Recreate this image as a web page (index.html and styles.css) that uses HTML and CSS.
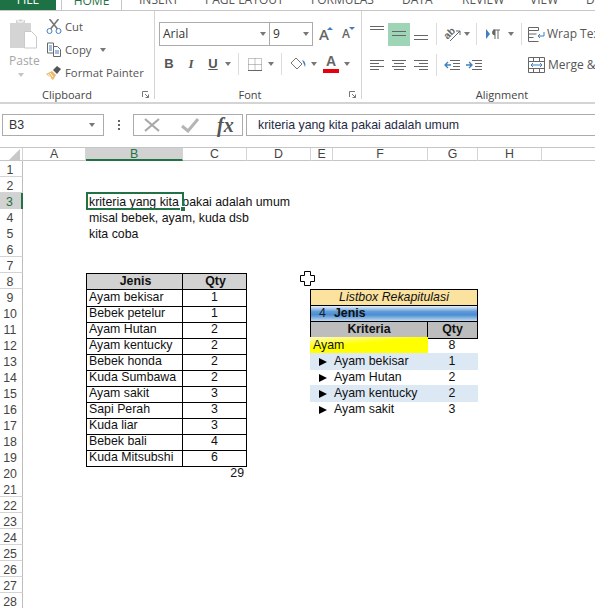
FILE: index.html
```html
<!DOCTYPE html>
<html lang="id">
<head>
<meta charset="utf-8">
<title>Listbox Rekapitulasi</title>
<link rel="stylesheet" href="styles.css">
</head>
<body>
<div class="app">
  <nav class="tabs">
    <span class="tab file">FILE</span>
    <span class="tab home">HOME</span>
    <span class="tab t-insert">INSERT</span>
    <span class="tab t-page">PAGE LAYOUT</span>
    <span class="tab t-form">FORMULAS</span>
    <span class="tab t-data">DATA</span>
    <span class="tab t-rev">REVIEW</span>
    <span class="tab t-view">VIEW</span>
    <span class="tab t-dev">DE</span>
  </nav>

  <section class="ribbon">
    <div class="group g-clip">
      <div class="group-body clip-body">
        <div class="paste">
          <svg width="29" height="31" viewBox="0 0 29 31"><path d="M1 5h6V2h9v3h6v9H15v16H1z" fill="#d4d4d4"/><path d="M9 1h5v3h-5z" fill="#d4d4d4" stroke="#fff"/><path d="M15.5 13.5h7l5 5v11.500h-12z" fill="#fff" stroke="#c9c9c9"/></svg>
          <span class="paste-label">Paste</span>
          <i class="caret light"></i>
        </div>
        <div class="clip-list">
          <div class="clip-item">
            <svg width="16" height="15" viewBox="0 0 16 15"><path d="M3.500 0l8 10M12.500 0l-8 10" stroke="#777" stroke-width="1.600" fill="none"/><circle cx="3.500" cy="12" r="2.500" fill="#fff" stroke="#3f7fbf"/><circle cx="12.500" cy="12" r="2.500" fill="#fff" stroke="#3f7fbf"/></svg>
            <span>Cut</span>
          </div>
          <div class="clip-item">
            <svg width="16" height="15" viewBox="0 0 16 15"><path d="M1.500 1h6v10h-6z" fill="#fff" stroke="#666"/><path d="M7.500 4.500h4l3 3v7h-7z" fill="#fff" stroke="#666"/><path d="M3 4h3M3 6h3M3 8h3M9 9h4M9 11h4" stroke="#3f7fbf"/></svg>
            <span>Copy</span><i class="caret copy-caret"></i>
          </div>
          <div class="clip-item">
            <svg width="16" height="15" viewBox="0 0 16 15"><path d="M0 9l6-3 4 4-3 5z" fill="#eeb76a"/><path d="M7 5l4-4 4 3-4 5z" fill="#555"/><path d="M4 8l3 4M2 9l3 4" stroke="#fff"/></svg>
            <span>Format Painter</span>
          </div>
        </div>
      </div>
      <div class="group-label label-clip">Clipboard<svg class="launch" width="7" height="7" viewBox="0 0 7 7"><path d="M.5 6V.5H6M3 3l3.500 3.500M6.500 3.500v3h-3" fill="none" stroke="#777"/></svg></div>
    </div>

    <div class="group g-font">
      <div class="group-body font-body">
        <div class="font-row1">
          <div class="combo c-name"><span>Arial</span><i class="caret"></i></div>
          <div class="combo c-size"><span>9</span><i class="caret"></i></div>
          <span class="big-a grow">A<i class="tri up"></i></span>
          <span class="big-a shrink">A<i class="tri down"></i></span>
        </div>
        <div class="font-row2">
          <span class="fmt bold">B</span>
          <span class="fmt ital">I</span>
          <span class="fmt under">U</span>
          <i class="caret c-u"></i>
          <b class="vsep s1"></b>
          <svg class="ic-border" width="14" height="13" viewBox="0 0 14 13"><path d="M.5.500h13v12H.5zM7 .5v12M.5 6.500h13" fill="none" stroke="#888" stroke-dasharray="1 1"/><path d="M0 12.500h14" stroke="#666"/></svg>
          <i class="caret c-b"></i>
          <b class="vsep s2"></b>
          <svg class="ic-fill" width="17" height="15" viewBox="0 0 17 15"><path d="M6 1l6 6-5 5-6-6z" fill="#fff" stroke="#777"/><path d="M12 3c3 1 4 4 3 7-1-3-2-5-3-7z" fill="#3f7fbf"/></svg>
          <i class="caret c-f"></i>
          <span class="font-color">A</span>
          <i class="caret c-c"></i>
        </div>
      </div>
      <div class="group-label label-font">Font<svg class="launch" width="7" height="7" viewBox="0 0 7 7"><path d="M.5 6V.5H6M3 3l3.500 3.500M6.500 3.500v3h-3" fill="none" stroke="#777"/></svg></div>
    </div>

    <div class="group g-align">
      <div class="group-body align-body">
        <div class="align-row">
          <svg class="al a1" width="14" height="8" viewBox="0 0 14 8"><path d="M0 .5h14M0 3.500h14M0 7.500h0" stroke="#666"/></svg>
          <span class="al-on"><svg width="14" height="6" viewBox="0 0 14 6"><path d="M0 .5h14M0 4.500h14" stroke="#666"/></svg></span>
          <svg class="al a3" width="14" height="8" viewBox="0 0 14 8"><path d="M0 2.500h14M0 6.500h14" stroke="#666"/></svg>
          <b class="vsep s3"></b>
          <svg class="ic-orient" width="17" height="17" viewBox="0 0 17 17"><text x="0" y="11" transform="rotate(-45 5 8)" class="orient-text">ab</text><path d="M6 15L16 5M16 5h-4M16 5v4" stroke="#666" fill="none"/></svg>
          <i class="caret c-o"></i>
          <b class="vsep s4"></b>
          <svg class="ic-para" width="14" height="10" viewBox="0 0 14 10"><path d="M0 0l4 5-4 5z" fill="#3f7fbf"/><path d="M7 1h7M9 1v9M12 1v9M9 1a2.500 2.500 0 0 0 0 5" stroke="#666" fill="#666"/></svg>
          <i class="caret c-p"></i>
          <b class="vsep s5"></b>
          <svg class="ic-wrap" width="17" height="15" viewBox="0 0 17 15"><path d="M.5.500h10v3H.5zM.5 3.500v11h10M.5 7h8M.5 10.500h5" fill="none" stroke="#666"/><path d="M16 5v4h-6M12 7l-2 2 2 2" fill="none" stroke="#3f7fbf"/></svg>
          <span class="al-text">Wrap Text</span>
        </div>
        <div class="align-row row-b">
          <svg class="al b1" width="14" height="10" viewBox="0 0 14 10"><path d="M0 .5h14M0 3.500h9M0 6.500h14M0 9.500h9" stroke="#666"/></svg>
          <svg class="al b2" width="14" height="10" viewBox="0 0 14 10"><path d="M0 .5h14M2 3.500h10M0 6.500h14M2 9.500h10" stroke="#666"/></svg>
          <svg class="al b3" width="14" height="10" viewBox="0 0 14 10"><path d="M0 .5h14M5 3.500h9M0 6.500h14M5 9.500h9" stroke="#666"/></svg>
          <b class="vsep s6"></b>
          <svg class="ic-ind" width="16" height="10" viewBox="0 0 16 10"><path d="M6 .5h10M9 3.500h7M9 6.500h7M6 9.500h10" stroke="#666"/><path d="M7 5H1M4 2L1 5l3 3" fill="none" stroke="#3f7fbf" stroke-width="1.300"/></svg>
          <svg class="ic-ind2" width="16" height="10" viewBox="0 0 16 10"><path d="M6 .5h10M9 3.500h7M9 6.500h7M6 9.500h10" stroke="#666"/><path d="M0 5h6M3 2l3 3-3 3" fill="none" stroke="#3f7fbf" stroke-width="1.300"/></svg>
          <svg class="ic-merge" width="17" height="16" viewBox="0 0 17 16"><path d="M.5.500h16v15H.5zM.5 4.500h16M.5 11.500h16M5.500.5v4M11.500.5v4M5.500 11.500v4M11.500 11.500v4" fill="none" stroke="#666"/><path d="M3 8h11M5 6L3 8l2 2M12 6l2 2-2 2" fill="none" stroke="#3f7fbf"/></svg>
          <span class="al-text">Merge &amp; Center</span>
        </div>
      </div>
      <div class="group-label">Alignment</div>
    </div>
  </section>

  <section class="formula">
    <div class="name-box"><span>B3</span><i class="caret"></i></div>
    <div class="dots"><i></i><i></i><i></i></div>
    <div class="fx-box">
      <svg width="20" height="16" viewBox="0 0 20 16"><path d="M2 2l14 12M16 2L2 14" stroke="#a9a9a9" stroke-width="2.200"/></svg>
      <svg width="20" height="16" viewBox="0 0 20 16"><path d="M2 9l6 5L18 2" fill="none" stroke="#b5b5b5" stroke-width="3"/></svg>
      <span class="fx">fx</span>
    </div>
    <div class="input">kriteria yang kita pakai adalah umum</div>
  </section>

  <section class="sheet">
    <div class="row head">
      <span class="corner"><svg width="11" height="11" viewBox="0 0 11 11"><path d="M11 0v11H0z" fill="#c8c8c8"/></svg></span>
      <span class="ch">A</span><span class="ch ch-on">B</span><span class="ch">C</span><span class="ch">D</span><span class="ch">E</span><span class="ch">F</span><span class="ch">G</span><span class="ch">H</span><span class="ch ch-last"></span>
    </div>
    <div class="row"><span class="rh">1</span></div>
    <div class="row"><span class="rh">2</span></div>
    <div class="row"><span class="rh rh-on">3</span><span class="cb t"><em class="overflow">kriteria yang kita pakai adalah umum</em><span class="sel"><i class="handle"></i></span></span></div>
    <div class="row"><span class="rh">4</span><span class="cb t"><em class="overflow">misal bebek, ayam, kuda dsb</em></span></div>
    <div class="row"><span class="rh">5</span><span class="cb t"><em class="overflow">kita coba</em></span></div>
    <div class="row"><span class="rh">6</span></div>
    <div class="row"><span class="rh">7</span></div>
    <div class="row"><span class="rh">8</span><span class="cb tb th first top">Jenis</span><span class="cc tb th top">Qty</span></div>
    <div class="row"><span class="rh">9</span><span class="cb tb first">Ayam bekisar</span><span class="cc tb num">1</span><span class="ef lb-title">Listbox Rekapitulasi</span></div>
    <div class="row"><span class="rh">10</span><span class="cb tb first">Bebek petelur</span><span class="cc tb num">1</span><span class="ef lb-count"><b class="count">4</b><b>Jenis</b></span></div>
    <div class="row"><span class="rh">11</span><span class="cb tb first">Ayam Hutan</span><span class="cc tb num">2</span><span class="lb-f lb-head">Kriteria</span><span class="cg lb-head lb-qty">Qty</span></div>
    <div class="row"><span class="rh">12</span><span class="cb tb first">Ayam kentucky</span><span class="cc tb num">2</span><span class="lb-f lb-group">Ayam</span><span class="cg num lb-num">8</span></div>
    <div class="row"><span class="rh">13</span><span class="cb tb first">Bebek honda</span><span class="cc tb num">2</span><span class="lb-f lb-item alt"><i class="arrow"></i>Ayam bekisar</span><span class="cg num lb-num alt">1</span></div>
    <div class="row"><span class="rh">14</span><span class="cb tb first">Kuda Sumbawa</span><span class="cc tb num">2</span><span class="lb-f lb-item"><i class="arrow"></i>Ayam Hutan</span><span class="cg num lb-num">2</span></div>
    <div class="row"><span class="rh">15</span><span class="cb tb first">Ayam sakit</span><span class="cc tb num">3</span><span class="lb-f lb-item alt"><i class="arrow"></i>Ayam kentucky</span><span class="cg num lb-num alt">2</span></div>
    <div class="row"><span class="rh">16</span><span class="cb tb first">Sapi Perah</span><span class="cc tb num">3</span><span class="lb-f lb-item"><i class="arrow"></i>Ayam sakit</span><span class="cg num lb-num">3</span></div>
    <div class="row"><span class="rh">17</span><span class="cb tb first">Kuda liar</span><span class="cc tb num">3</span></div>
    <div class="row"><span class="rh">18</span><span class="cb tb first">Bebek bali</span><span class="cc tb num">4</span></div>
    <div class="row"><span class="rh">19</span><span class="cb tb first">Kuda Mitsubshi</span><span class="cc tb num">6</span></div>
    <div class="row"><span class="rh">20</span><span class="cc total">29</span></div>
    <div class="row"><span class="rh">21</span></div>
    <div class="row"><span class="rh">22</span></div>
    <div class="row"><span class="rh">23</span></div>
    <div class="row"><span class="rh">24</span></div>
    <div class="row"><span class="rh">25</span></div>
    <div class="row"><span class="rh">26</span></div>
    <div class="row"><span class="rh">27</span></div>
    <div class="row"><span class="rh">28</span></div>
    <svg class="cursor" width="15" height="15" viewBox="0 0 15 15"><path d="M4.500.5h6v4h4v6h-4v4h-6v-4h-4v-6h4z" fill="#fff" stroke="#000" stroke-linejoin="round"/></svg>
  </section>
</div>
</body>
</html>
```
FILE: styles.css
```css
* { box-sizing: border-box; }
html, body { margin: 0; padding: 0; background: #fff; }
body { width: 595px; height: 608px; overflow: hidden; font-family: "Liberation Sans", Arial, sans-serif; color: #222; }
.app { width: 595px; height: 608px; overflow: hidden; position: relative; }
i, em { font-style: normal; }

/* tabs */
.tabs { height: 11px; display: flex; overflow: hidden; border-bottom: 1px solid #c6c6c6; font: 12px/12px "Open Sans", sans-serif; color: #555; position: relative; }
.tab { flex: none; padding-top: 0; margin-top: -6px; height: 16px; }
.file { width: 56px; margin-right: 5px; background: #1e7145; color: #fff; text-align: center; }
.home { width: 61px; color: #1e7145; text-align: center; background: #fff; border: 1px solid #c6c6c6; height: 20px; margin-top: -6px; margin-right: 17px; }
.t-insert { width: 66px; }
.t-page { width: 106px; }
.t-form { width: 91px; }
.t-data { width: 60px; }
.t-rev { width: 68px; }
.t-view { width: 56px; }
.t-dev { width: 20px; }

/* ribbon */
.ribbon { height: 93px; display: flex; border-bottom: 2px solid #d4d4d4; color: #555; font: 11.500px/14px "Open Sans", sans-serif; }
.group { position: relative; display: flex; flex-direction: column; padding-top: 4px; flex: none; height: 88px; }
.g-clip { width: 155px; border-right: 1px solid #d4d4d4; }
.g-font { width: 207px; border-right: 1px solid #d4d4d4; }
.g-align { width: 280px; }
.group-body { height: 73px; flex: none; }
.group-label { position: relative; height: 14px; flex: none; text-align: center; color: #444; font-size: 11px; line-height: 13px; }
.label-clip { padding-right: 20px; }
.label-font { padding-right: 16px; }
.launch { position: absolute; right: 5px; top: 3px; }
.caret { display: inline-block; width: 0; height: 0; border: 3.500px solid transparent; border-top: 4px solid #777; border-bottom: 0; }
.caret.light { border-top-color: #c4c4c4; }

.clip-body { display: flex; padding-left: 9px; }
.paste { width: 37px; display: flex; flex-direction: column; align-items: flex-start; color: #a6a6a6; padding-top: 3px; }
.paste-label { margin-top: 5px; display: block; font-size: 12px; }
.paste .caret { margin: 5px 0 0 9px; }
.clip-list { display: flex; flex-direction: column; gap: 8px; padding-top: 4px; }
.clip-item { display: flex; align-items: center; gap: 3px; height: 15px; white-space: nowrap; font-size: 11.300px; }
.copy-caret { margin-left: 6px; }

.font-body { padding: 7px 0 0 4px; }
.font-row1 { display: flex; align-items: center; height: 24px; }
.combo { height: 24px; border: 1px solid #ababab; display: flex; align-items: center; justify-content: space-between; padding: 0 3px 0 3px; color: #333; font-size: 12px; }
.c-name { width: 111px; }
.c-size { width: 43px; border-left: 0; }
.big-a { position: relative; font-size: 15px; width: 22px; display: inline-block; text-align: center; color: #666; font-weight: 600; }
.shrink { font-size: 12px; }
.tri { position: absolute; right: 2px; top: 0; border: 3px solid transparent; }
.tri.up { border-bottom: 3px solid #3f7fbf; border-top: 0; }
.tri.down { border-top: 3px solid #3f7fbf; border-bottom: 0; right: 2px; }
.font-row2 { position: relative; height: 24px; margin-top: 6px; display: flex; align-items: center; padding-left: 5px; }
.fmt { width: 10px; text-align: center; font-size: 13px; color: #555; font-family: "Liberation Sans", sans-serif; flex: none; }
.bold { font-weight: 700; }
.ital { font-style: italic; margin-left: 12px; font-family: "Liberation Serif", serif; font-weight: 700; }
.under { margin-left: 12px; text-decoration: underline; font-weight: 700; }
.c-u { margin-left: 7px; }
.vsep { display: block; width: 1px; height: 22px; background: #dcdcdc; flex: none; }
.s1 { margin-left: 7px; }
.ic-border { margin-left: 9px; flex: none; }
.c-b { margin-left: 6px; }
.s2 { margin-left: 7px; }
.ic-fill { margin-left: 8px; flex: none; }
.c-f { margin-left: 4px; }
.font-color { margin-left: 6px; width: 16px; height: 18px; text-align: center; font-size: 14px; line-height: 13px; font-weight: 700; color: #666; border-bottom: 4px solid #e8000d; flex: none; font-family: "Liberation Sans", sans-serif; }
.c-c { margin-left: 5px; }

.align-body { padding: 7px 0 0 8px; }
.align-row { display: flex; align-items: center; height: 24px; font-size: 12px; }
.row-b { margin-top: 7px; }
.al-on { width: 22px; height: 23px; background: #9fd5b7; display: flex; align-items: center; justify-content: center; margin-left: 4px; flex: none; }
.al { flex: none; }
.a1 { margin-top: -8px; }
.a3 { margin-left: 4px; margin-top: 6px; }
.s3 { margin-left: 8px; }
.ic-orient { margin-left: 7px; flex: none; }
.orient-text { font: 700 10px "Liberation Sans", sans-serif; fill: #666; }
.c-o { margin-left: 3px; }
.s4 { margin-left: 6px; }
.ic-para { margin-left: 9px; flex: none; }
.c-p { margin-left: 8px; }
.s5 { margin-left: 7px; }
.ic-wrap { margin-left: 6px; flex: none; }
.al-text { margin-left: 2px; white-space: nowrap; }
.row-b .al-text { margin-left: 3px; }
.b2 { margin-left: 8px; }
.b3 { margin-left: 8px; }
.s6 { margin-left: 8px; }
.ic-ind { margin-left: 7px; flex: none; }
.ic-ind2 { margin-left: 6px; flex: none; }
.ic-merge { margin-left: 46px; flex: none; }

/* formula bar */
.formula { height: 43px; display: flex; padding: 10px 0 0 2px; align-items: flex-start; background: #fff; }
.name-box { width: 102px; height: 22px; border: 1px solid #ababab; display: flex; align-items: center; justify-content: space-between; padding: 0 8px 0 6px; font-size: 12.350px; color: #333; }
.dots { width: 29px; height: 22px; display: flex; flex-direction: column; gap: 2px; align-items: center; justify-content: center; }
.dots i { width: 2px; height: 2px; background: #666; display: block; }
.fx-box { width: 110px; height: 22px; border: 1px solid #ababab; display: flex; align-items: center; gap: 17px; padding-left: 9px; }
.fx { font: italic 700 20px/18px "Liberation Serif", serif; color: #555; margin-left: 0; }
.input { flex: 1; margin-left: 3px; height: 22px; border: 1px solid #ababab; border-right: 0; padding-left: 11px; font-size: 12.350px; line-height: 20px; color: #1f2a44; }

/* sheet */
.sheet { position: relative; border-top: 1px solid #c6c6c6; }
.row { display: grid; grid-template-columns: 23px 63px 97px 64px 64px 22px 95px 50px 64px 1fr; height: 16px; font-size: 12.350px; line-height: 17px; color: #111; }
.head { height: 13px; line-height: 13px; color: #444; border-bottom: 1px solid #c6c6c6; background: #fff; }
.corner { border-right: 1px solid #d4d4d4; display: flex; justify-content: flex-end; align-items: flex-end; padding: 0 2px 1px 0; overflow: hidden; }
.ch { border-right: 1px solid #d4d4d4; text-align: center; }
.ch-on { background: #d2d2d2; border-bottom: 2px solid #217346; height: 13px; color: #217346; }
.ch-last { border-right: 0; }
.rh { grid-column: 1; border-right: 1px solid #bdbdbd; border-bottom: 1px solid #d4d4d4; text-align: center; color: #444; padding-right: 2px; background: #fff; line-height: 18px; overflow: hidden; }
.rh-on { background: #d2d2d2; border-right: 2px solid #217346; color: #217346; }
.cb { grid-column: 3; }
.cc { grid-column: 4; }
.cg { grid-column: 8; }
.ef { grid-column: 6 / 9; margin-left: -1px; }
.lb-f { grid-column: 6 / 8; margin-left: -1px; }
.t { position: relative; padding-left: 3px; white-space: nowrap; line-height: 18px; }
.overflow { position: relative; }
.sel { position: absolute; left: 0; top: -1px; width: 98px; height: 18px; border: 2px solid #217346; }
.handle { position: absolute; right: -4px; bottom: -4px; background: #217346; border: 1px solid #fff; box-sizing: content-box; width: 4px; height: 4px; }
.tb { border-right: 1px solid #000; border-bottom: 1px solid #000; padding-left: 2px; white-space: nowrap; margin-bottom: -1px; }
.first { border-left: 1px solid #000; }
.top { border-top: 1px solid #000; }
.th { background: #d2d2d2; font-weight: 700; text-align: center; line-height: 15px; }
.num { text-align: center; padding-left: 0; }
.lb-num { padding-right: 2px; }
.total { text-align: right; padding-right: 3px; }
.lb-title { background: #fbe29f; border: 1px solid #000; border-bottom: 0; text-align: center; font-style: italic; line-height: 15px; }
.lb-count { border: 1px solid #000; border-bottom: 0; background: linear-gradient(#e8f1fa 0%, #5f9bd8 35%, #4b8dd1 55%, #d6e6f6 100%); line-height: 14px; display: flex; }
.count { width: 23px; text-align: center; font-weight: 400; color: #123; }
.lb-head { background: #bdbdbd; font-weight: 700; text-align: center; border: 1px solid #000; line-height: 14px; margin-bottom: -1px; }
.lb-qty { border-left: 0; }
.lb-group { background: linear-gradient(175deg, #fff8c8 0%, #ffff00 40%, #ffff00 100%); padding-left: 3px; line-height: 17px; }
.lb-item { display: flex; align-items: center; }
.arrow { width: 0; height: 0; border: 4px solid transparent; border-left: 8px solid #000; border-right: 0; margin: 0 7px 0 9px; }
.alt { background: #dce9f5; }
.cursor { position: absolute; left: 300px; top: 123px; }
```
